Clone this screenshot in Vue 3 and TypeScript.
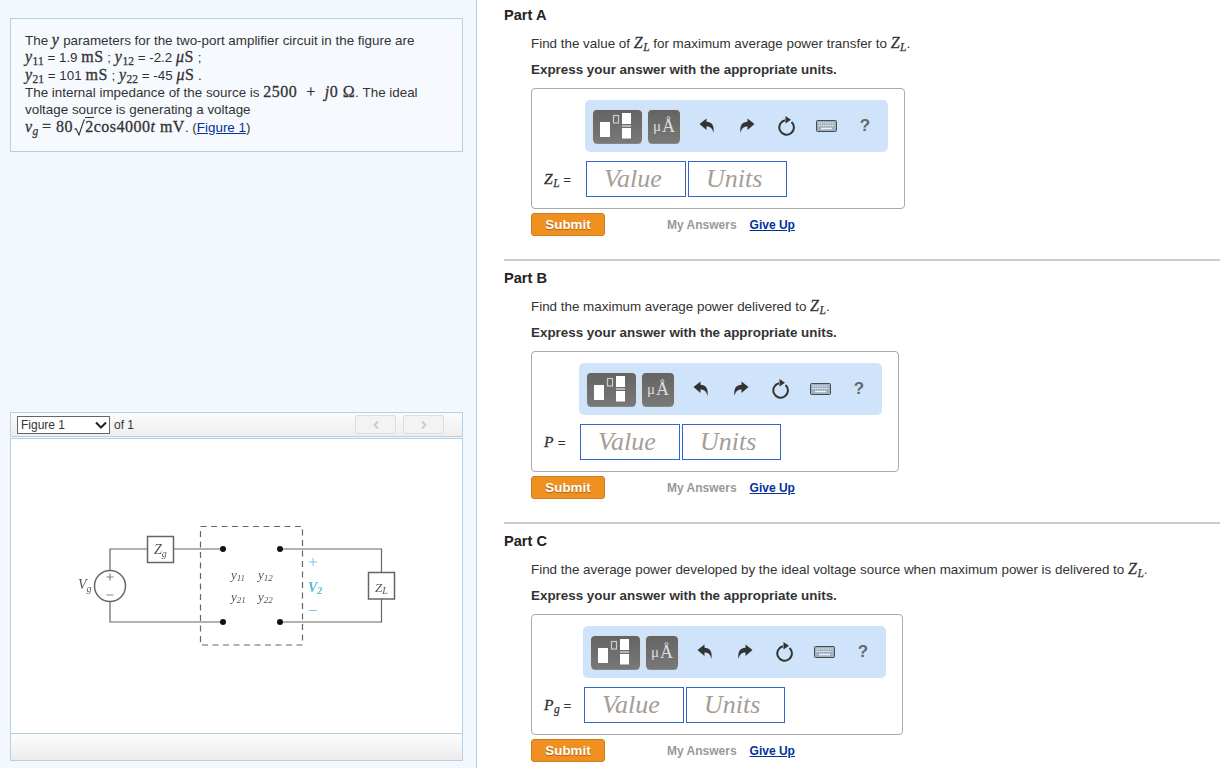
<script setup lang="ts">
interface Part {
  name: string
  question: string
  sym: string
  sub: string
  labelClass: string
}
const parts: Part[] = [
  { name: 'Part A', question: 'Find the value of ', sym: 'Z', sub: 'L', labelClass: 'la' },
  { name: 'Part B', question: 'Find the maximum average power delivered to ', sym: 'P', sub: '', labelClass: 'lb' },
  { name: 'Part C', question: 'Find the average power developed by the ideal voltage source when maximum power is delivered to ', sym: 'P', sub: 'g', labelClass: 'lc' }
]
</script>

<template>
  <div class="page">
    <aside class="side">
      <div class="intro">
        <div class="ln">The <i class="m">y</i> parameters for the two-port amplifier circuit in the figure are</div>
        <div class="ln"><i class="m">y</i><sub class="s">11</sub> = 1.9 <span class="m">mS</span> ; <i class="m">y</i><sub class="s">12</sub> = -2.2 <span class="m"><i>μ</i>S</span> ;</div>
        <div class="ln"><i class="m">y</i><sub class="s">21</sub> = 101 <span class="m">mS</span> ; <i class="m">y</i><sub class="s">22</sub> = -45 <span class="m"><i>μ</i>S</span> .</div>
        <div class="ln">The internal impedance of the source is <span class="m">2500 &nbsp;+&nbsp; <i>j</i>0 Ω</span>. The ideal</div>
        <div class="ln">voltage source is generating a voltage</div>
        <div class="ln"><i class="m">v</i><sub class="s si">g</sub> <span class="m">= 80<svg class="radical" width="11" height="18" viewBox="0 0 11 18"><path d="M0.500 10.500 2 9.500 5 16 10 1H11" fill="none" stroke="#333" stroke-width="1.100"/></svg><span class="rad">2</span>cos4000<i>t</i> mV</span>. <span class="fig-link">(<a>Figure 1</a>)</span></div>
      </div>

      <div class="pager">
        <div class="select">Figure 1<svg width="12" height="8" viewBox="0 0 12 8"><path d="M1 1.500 6 6.500 11 1.500" fill="none" stroke="#222" stroke-width="2"/></svg></div>
        <span class="of">of 1</span>
        <div class="nav">
          <div class="nav-btn"><svg width="8" height="10" viewBox="0 0 8 10"><path d="M6 1.500 2.500 5 6 8.500" fill="none" stroke="#ccc" stroke-width="2"/></svg></div>
          <div class="nav-btn"><svg width="8" height="10" viewBox="0 0 8 10"><path d="M2 1.500 5.500 5 2 8.500" fill="none" stroke="#ccc" stroke-width="2"/></svg></div>
        </div>
      </div>

      <div class="figure">
        <svg class="circuit" width="451" height="294" viewBox="11 439 451 294">
          <g fill="none" stroke="#666" stroke-width="1.200">
            <path d="M110 570.500V549H147M174 549H223M280 549H381.500V572.500M381.500 599V622H280M223 622H110V601.500"/>
            <rect x="147.500" y="536.500" width="26" height="26" stroke-width="1.500"/>
            <rect x="368.500" y="572.500" width="26" height="26.500" stroke-width="1.500"/>
            <circle cx="110" cy="586" r="15.500" stroke-width="1.500"/>
            <rect x="200.500" y="526.500" width="102" height="118.500" stroke-dasharray="6 4.500"/>
            <path d="M110 573.500v7M106.500 577h7M106.500 595h7" stroke="#888"/>
          </g>
          <g fill="#111">
            <circle cx="223" cy="549" r="3"/><circle cx="280" cy="549" r="3"/>
            <circle cx="223" cy="622" r="3"/><circle cx="280" cy="622" r="3"/>
          </g>
          <g class="st">
            <text x="78" y="589" font-size="14">V<tspan font-size="10" dy="3">g</tspan></text>
            <text x="154" y="554" font-size="14">Z<tspan font-size="10" dy="3">g</tspan></text>
            <text x="375" y="592" font-size="13">Z<tspan font-size="10" dy="2">L</tspan></text>
            <text x="231" y="579" font-size="13">y<tspan font-size="9" dy="2">11</tspan></text>
            <text x="258" y="579" font-size="13">y<tspan font-size="9" dy="2">12</tspan></text>
            <text x="231" y="601" font-size="13">y<tspan font-size="9" dy="2">21</tspan></text>
            <text x="258" y="601" font-size="13">y<tspan font-size="9" dy="2">22</tspan></text>
          </g>
          <g class="st">
            <text class="v2" x="308" y="592" font-size="14">V<tspan font-size="10" dy="2">2</tspan></text>
            <path d="M309 562h8M313 558v8M309 610.500h8" stroke="#7cc6e2" fill="none"/>
          </g>
        </svg>
      </div>
      <div class="foot"></div>
    </aside>

    <main class="main">
      <section v-for="p in parts" :key="p.name" class="part">
        <h2 class="heading">{{ p.name }}</h2>
        <div class="inset">
          <p class="q">{{ p.question }}<template v-if="p.name === 'Part A'"><i class="m">Z</i><sub class="s si">L</sub> for maximum average power transfer to </template><i class="m">Z</i><sub class="s si">L</sub>.</p>
          <p class="express">Express your answer with the appropriate units.</p>
          <div class="answer">
            <div class="toolbar">
              <div class="tool tpl">
                <svg width="49" height="33" viewBox="0 0 49 33">
                  <rect x="7" y="12" width="10" height="15" fill="#fff"/>
                  <rect x="20.500" y="5.500" width="5" height="7.500" fill="none" stroke="#ccc" stroke-width="1.200"/>
                  <rect x="29" y="3" width="9" height="11" fill="#fff"/>
                  <rect x="29" y="15.500" width="9" height="1" fill="#fff"/>
                  <rect x="29" y="18" width="9" height="10.500" fill="#fff"/>
                </svg>
              </div>
              <div class="tool unit"><span class="mu">μ</span><span class="ang">Å</span></div>
              <div class="plain first">
                <svg width="16" height="16" viewBox="0 0 16 16"><path d="M0.500 6 7.500 0.500V3.800C12.500 3.800 15.500 7 14.500 15 13.500 11 12 8.500 7.500 8.500V12Z" fill="#333"/></svg>
              </div>
              <div class="plain">
                <svg width="16" height="16" viewBox="0 0 16 16"><path d="M15.500 6 8.500 0.500V3.800C3.500 3.800 0.500 7 1.500 15 2.500 11 4 8.500 8.500 8.500V12Z" fill="#333"/></svg>
              </div>
              <div class="plain">
                <svg width="18" height="20" viewBox="0 0 18 20"><path d="M7 4.300A7.300 7.300 0 1 0 13.500 6" fill="none" stroke="#333" stroke-width="2"/><path d="M7.500 0 13 3.800 7.500 7.500Z" fill="#333"/></svg>
              </div>
              <div class="plain kb">
                <svg width="21" height="12" viewBox="0 0 21 12"><rect x="0.500" y="0.500" width="20" height="11" rx="1" fill="#9fb0c0" stroke="#4a4a4a"/><path d="M2.500 3h16M2.500 5.500h16" stroke="#eef3f7" stroke-dasharray="1.500 0.700"/><path d="M5 8.500h11" stroke="#eef3f7" stroke-width="1.500"/></svg>
              </div>
              <div class="plain help">?</div>
            </div>
            <div class="label" :class="p.labelClass"><i class="m">{{ p.sym }}</i><sub v-if="p.sub" class="s si">{{ p.sub }}</sub> =</div>
            <div class="inputs">
              <div class="field">Value</div>
              <div class="field">Units</div>
            </div>
          </div>
          <div class="actions">
            <div class="submit">Submit</div>
            <span class="my">My Answers</span>
            <a class="give">Give Up</a>
          </div>
        </div>
      </section>
    </main>
  </div>
</template>

<style>
html, body { margin: 0; background: #fff; }
</style>

<style scoped>
.page { display: flex; width: 1220px; height: 768px; overflow: hidden; font-family: "Liberation Sans", Arial, sans-serif; color: #333; font-size: 13.400px; }
.side { box-sizing: border-box; width: 477px; height: 768px; flex: none; background: #f3f8fe; border-right: 1px solid #b8cfe0; padding: 18px 13px 0 10px; display: flex; flex-direction: column; }
.intro { box-sizing: border-box; height: 134px; border: 1px solid #b8cfe0; padding: 12px 14px 0; background: #f6faff; white-space: nowrap; }
.ln { height: 17.400px; line-height: 17.400px; }
.m { font-family: "Liberation Serif", serif; font-size: 16px; font-weight: 400; color: #333; letter-spacing: 0.500px; -webkit-text-stroke: 0.300px #333; }
.s { font-family: "Liberation Serif", serif; font-size: 11.500px; font-weight: 400; -webkit-text-stroke: 0.250px #333; vertical-align: baseline; position: relative; top: 3px; line-height: 0; }
.si { font-style: italic; }
.radical { vertical-align: -5px; margin-left: 1px; }
.rad { border-top: 1.100px solid #333; }
.fig-link a { color: #003399; text-decoration: underline; }
.pager { box-sizing: border-box; height: 25px; margin-top: 260px; border: 1px solid #b8cfe0; background: linear-gradient(#fbfbfb, #eee); display: flex; align-items: center; padding-left: 6px; font-size: 12px; }
.select { box-sizing: border-box; width: 93px; height: 18px; border: 1px solid #666; background: #fff; padding-left: 3px; display: flex; align-items: center; justify-content: space-between; padding-right: 2px; line-height: 16px; }
.of { margin-left: 4px; }
.nav { margin-left: auto; display: flex; gap: 7px; margin-right: 18px; }
.nav-btn { box-sizing: border-box; width: 41px; height: 19px; border: 1px solid #ddd; border-radius: 2px; display: flex; align-items: center; justify-content: center; background: #f3f3f3; }
.figure { box-sizing: border-box; height: 295px; margin-top: 1px; border: 1px solid #b8cfe0; border-bottom: 0; background: #fff; }
.circuit { display: block; filter: blur(0.4px); }
.st text { font-family: "Liberation Serif", serif; font-style: italic; fill: #555; }
.st .v2 { fill: #55b8de; font-weight: 700; }
.foot { box-sizing: border-box; height: 28px; border: 1px solid #b8cfe0; background: linear-gradient(#fdfdfd, #ececec); }
.main { flex: 1; min-width: 0; padding-left: 27px; }
.part { box-sizing: border-box; height: 263px; padding-top: 5px; }
.part:not(:last-child)::after { content: ""; display: block; height: 2px; background: #ccc; margin-top: 23px; }
.heading { margin: 0; font-size: 14.600px; font-weight: 700; line-height: 20px; color: #222; }
.inset { padding-left: 27px; }
.q { margin: 8px 0 0; line-height: 20px; height: 20px; }
.express { margin: 7px 0 0; line-height: 20px; font-weight: 700; }
.answer { box-sizing: border-box; display: inline-grid; grid-template-columns: auto auto; margin-top: 8px; height: 121px; border: 1px solid #aaa; border-radius: 4px; background: #fff; padding: 11px 16px 0 12px; align-content: start; vertical-align: top; }
.toolbar { grid-column: 2; box-sizing: border-box; width: 303px; height: 52px; background: #cfe4fb; border-radius: 5px; display: flex; align-items: center; padding-left: 7px; }
.tool { box-sizing: border-box; height: 35px; border: 1px solid #ddd; border-bottom-color: #888; border-radius: 5px; background: linear-gradient(#646464, #787878); display: flex; align-items: center; justify-content: center; }
.tpl { width: 51px; }
.unit { width: 34px; margin-left: 4px; color: #ddd; font-family: "Liberation Serif", serif; font-size: 15px; gap: 1px; }
.ang { font-size: 18px; }
.plain { width: 40px; display: flex; justify-content: center; align-items: center; }
.first { margin-left: 6px; }
.kb { width: 38px; }
.help { font-size: 17px; font-weight: 700; color: #666; }
.label { grid-column: 1; grid-row: 2; align-self: center; white-space: nowrap; height: 20px; line-height: 20px; margin-top: 9px; }
.label .m { font-size: 15.500px; }
.la { width: 41px; }
.lb { width: 35px; }
.lc { width: 39px; }
.inputs { grid-column: 2; grid-row: 2; display: flex; gap: 2px; margin-top: 9px; padding-left: 1px; }
.field { box-sizing: border-box; width: 100px; height: 36px; border: 1px solid #3366cc; font-family: "Liberation Serif", serif; font-style: italic; font-size: 26px; color: #a59d96; padding-left: 17px; line-height: 33px; background: #fff; }
.field:last-child { width: 99px; }
.actions { display: flex; align-items: center; margin-top: 4px; height: 23px; font-size: 12px; font-weight: 700; }
.submit { box-sizing: border-box; width: 74px; height: 23px; border: 1px solid #cf7d1f; border-radius: 3px; background: #f09020; color: #fff; text-align: center; line-height: 22px; font-size: 13.400px; text-shadow: 0 1px 1px #a85f10; }
.my { margin-left: 62px; color: #999; }
.give { margin-left: 13px; color: #003399; text-decoration: underline; }
</style>
